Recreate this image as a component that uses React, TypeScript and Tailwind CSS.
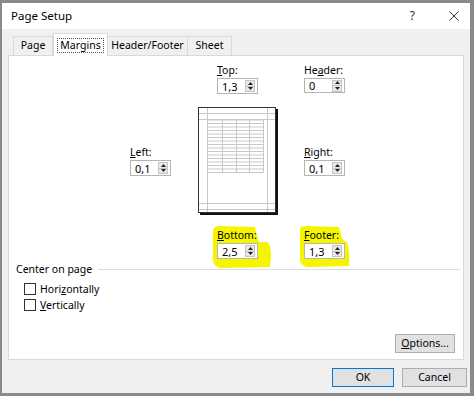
import React from "react";

const font = { fontFamily: '"Noto Sans", "Segoe UI", "Liberation Sans", sans-serif' };

const Spin = ({ value }: { value: string }) => (
  <div className="flex h-[16px] w-[41px] items-center border border-[#b4b4b4] bg-white pl-[4px] pr-[2px]">
    <span className="flex-1 text-[11px] leading-none text-black">{value}</span>
    <div className="flex h-[12px] w-[10px] flex-col border border-[#c4c4c4] bg-[#e8e8e8]">
      <div className="flex flex-1 items-center justify-center border-b border-[#c4c4c4]">
        <svg width="5" height="3" viewBox="0 0 5 3">
          <path d="M0 3 L2.5 0 L5 3 Z" fill="#222" />
        </svg>
      </div>
      <div className="flex flex-1 items-center justify-center">
        <svg width="5" height="3" viewBox="0 0 5 3">
          <path d="M0 0 L2.5 3 L5 0 Z" fill="#222" />
        </svg>
      </div>
    </div>
  </div>
);

const Field = ({ label, hot, value }: { label: string; hot: number; value: string }) => (
  <div className="flex flex-col">
    <div className="h-[15px] text-[10.5px] leading-[15px] text-black">
      {label.slice(0, hot)}
      <span className="underline">{label[hot]}</span>
      {label.slice(hot + 1)}
    </div>
    <Spin value={value} />
  </div>
);

// yellow marker strokes drawn over the screenshot
const Highlight = ({ wide }: { wide: boolean }) => (
  <svg
    className="absolute left-[-5px] top-[-2px]"
    width={wide ? 62 : 52}
    height="43"
    viewBox={wide ? "0 0 62 43" : "0 0 52 43"}
  >
    {wide ? (
      <path d="M1 5 Q1 0 8 0 L43 1 Q45 12 47 16 L55 16 Q59 18 59 30 L58 41 L8 42 Q1 40 1 34 Z" fill="#f6f500" />
    ) : (
      <path d="M1 3 Q1 0 8 0 L40 1 Q42 10 44 14 L48 16 Q51 24 50 40 L8 41 Q1 39 1 34 Z" fill="#f6f500" />
    )}
  </svg>
);

const PagePreview = () => {
  const rows = Array.from({ length: 16 }, (_, i) => 13 + i * 3.5);
  return (
    <svg width="81" height="109" viewBox="0 0 81 109">
      <rect x="2" y="2" width="78" height="106" fill="#111" />
      <rect x="0.5" y="0.5" width="77" height="105" fill="#fff" stroke="#333" />
      <g stroke="#c8c8c8" strokeWidth="1">
        <line x1="9.5" y1="1" x2="9.5" y2="105" />
        <line x1="69.5" y1="1" x2="69.5" y2="105" />
        <line x1="1" y1="6.5" x2="77" y2="6.5" />
        <line x1="1" y1="12.5" x2="77" y2="12.5" />
        <line x1="1" y1="96.5" x2="77" y2="96.5" />
        <line x1="1" y1="102.5" x2="77" y2="102.5" />
        {rows.map((y) => (
          <line key={y} x1="9.5" y1={y} x2="65.5" y2={y} />
        ))}
        <line x1="24.5" y1="13" x2="24.5" y2="65.5" />
        <line x1="38.5" y1="13" x2="38.5" y2="65.5" />
        <line x1="51.5" y1="13" x2="51.5" y2="65.5" />
        <line x1="65.5" y1="13" x2="65.5" y2="65.5" />
      </g>
    </svg>
  );
};

const Check = ({ label, hot }: { label: string; hot: number }) => (
  <div className="flex h-[16px] items-center">
    <div className="h-[12px] w-[12px] border border-[#333] bg-white" />
    <span className="ml-[4px] text-[10.5px] leading-none text-black">
      {label.slice(0, hot)}
      <span className="underline">{label[hot]}</span>
      {label.slice(hot + 1)}
    </span>
  </div>
);

export default function App() {
  return (
    <div className="h-[396px] w-[474px] overflow-hidden bg-[#8a8a8a] pt-[3px]" style={font}>
      <div className="ml-[2px] flex h-[390px] w-[468px] flex-col bg-[#f0f0f0]">
        <div className="flex h-[26px] items-center bg-white pl-[9px]">
          <span className="flex-1 text-[11.5px] text-black">Page Setup</span>
          <span className="mr-[34px] text-[12px] text-[#333]">?</span>
          <svg width="10" height="10" viewBox="0 0 10 10" className="mr-[11px]">
            <path d="M0.5 0.5 L9.5 9.5 M9.5 0.5 L0.5 9.5" stroke="#333" strokeWidth="1" />
          </svg>
        </div>

        <div className="ml-[11px] mt-[4px] flex h-[22px] items-end">
          <div className="flex h-[19px] w-[40px] items-center justify-center border border-b-0 border-[#d9d9d9] bg-[#f0f0f0] text-[10.5px] text-black">
            Page
          </div>
          <div className="relative z-10 mb-[-1px] flex h-[23px] w-[55px] items-center justify-center border border-b-0 border-[#d9d9d9] bg-white">
            <span className="border border-dotted border-[#555] px-[2px] text-[10.5px] leading-[13px] text-black">Margins</span>
          </div>
          <div className="flex h-[19px] w-[80px] items-center justify-center border border-b-0 border-l-0 border-[#d9d9d9] bg-[#f0f0f0] text-[10.5px] text-black">
            Header/Footer
          </div>
          <div className="flex h-[19px] w-[44px] items-center justify-center border border-b-0 border-l-0 border-[#d9d9d9] bg-[#f0f0f0] text-[10.5px] text-black">
            Sheet
          </div>
        </div>

        <div className="ml-[6px] flex h-[305px] w-[456px] flex-col border border-[#d9d9d9] bg-white">
          <div className="mt-[7px] grid grid-cols-[68px_80px_26px_42px] grid-rows-[30px_108px_32px] gap-y-[14px] pl-[121px]">
            <div />
            <div className="ml-[19px]">
              <Field label="Top:" hot={0} value="1,3" />
            </div>
            <div />
            <Field label="Header:" hot={2} value="0" />

            <div className="mt-[38px]">
              <Field label="Left:" hot={0} value="0,1" />
            </div>
            <PagePreview />
            <div />
            <div className="mt-[38px]">
              <Field label="Right:" hot={0} value="0,1" />
            </div>

            <div />
            <div className="relative ml-[19px] mt-[-1px]">
              <Highlight wide />
              <div className="relative">
                <Field label="Bottom:" hot={0} value="2,5" />
              </div>
            </div>
            <div />
            <div className="relative mt-[-1px]">
              <Highlight wide={false} />
              <div className="relative">
                <Field label="Footer:" hot={0} value="1,3" />
              </div>
            </div>
          </div>

          <div className="mt-[1px] flex items-center pl-[7px] pr-[3px]">
            <span className="text-[10.5px] leading-[14px] text-black">Center on page</span>
            <div className="ml-[6px] h-px flex-1 bg-[#dcdcdc]" />
          </div>
          <div className="ml-[15px] mt-[5px] flex flex-col">
            <Check label="Horizontally" hot={4} />
            <Check label="Vertically" hot={0} />
          </div>
          <div className="flex-1" />
          <div className="mb-[6px] mr-[8px] flex justify-end">
            <div className="flex h-[19px] w-[60px] items-center justify-center border border-[#adadad] bg-[#e1e1e1] text-[10.5px] text-black">
              <span className="underline">O</span>ptions...
            </div>
          </div>
        </div>

        <div className="mr-[3px] mt-[8px] flex justify-end gap-[8px]">
          <div className="flex h-[19px] w-[62px] items-center justify-center border border-[#0078d7] bg-[#e1e1e1] text-[10.5px] text-black">
            OK
          </div>
          <div className="flex h-[19px] w-[65px] items-center justify-center border border-[#adadad] bg-[#e1e1e1] text-[10.5px] text-black">
            Cancel
          </div>
        </div>
      </div>
    </div>
  );
}
